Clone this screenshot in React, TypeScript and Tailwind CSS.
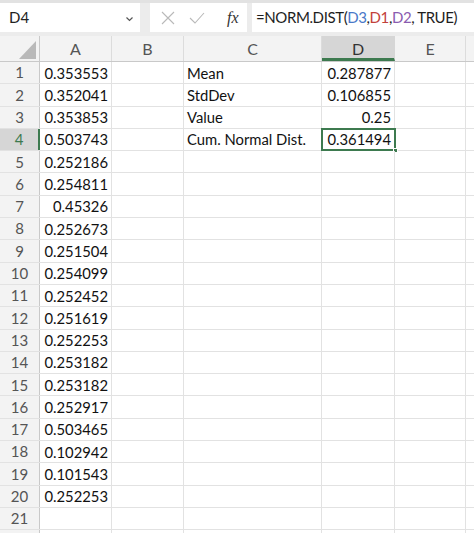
import React from 'react';

const colA = [
    '0.353553', '0.352041', '0.353853', '0.503743', '0.252186', '0.254811', '0.45326',
    '0.252673', '0.251504', '0.254099', '0.252452', '0.251619', '0.252253', '0.253182',
    '0.253182', '0.252917', '0.503465', '0.102942', '0.101543', '0.252253', '',
];

const side: Record<number, [string, string]> = {
    1: ['Mean', '0.287877'],
    2: ['StdDev', '0.106855'],
    3: ['Value', '0.25'],
    4: ['Cum. Normal Dist.', '0.361494'],
};

const cols = [
    { key: 'A', w: 'w-[72px]' },
    { key: 'B', w: 'w-[72px]' },
    { key: 'C', w: 'w-[138px]' },
    { key: 'D', w: 'w-[73px]' },
    { key: 'E', w: 'w-[71px]' },
];

const FONT = { fontFamily: 'Lato, "Open Sans", sans-serif' };

const Toolbar: React.FC = () => (
    <div className="h-[36px] bg-[#ececec] border-t-[3px] border-[#e2e2e2] flex items-start gap-[10px]">
        <div className="w-[140px] h-[29px] bg-white flex items-center justify-between pl-[9px] pr-[6px]">
            <span className="text-[15px] text-[#222]">D4</span>
            <svg width="9" height="6" viewBox="0 0 9 6" className="mt-[2px]">
                <path d="M1.5 1.5 L4.5 4.5 L7.5 1.5" fill="none" stroke="#555" strokeWidth="1.2" />
            </svg>
        </div>
        <div className="w-[97px] h-[29px] bg-white flex items-center pl-[11px] gap-[14px]">
            <svg width="14" height="14" viewBox="0 0 14 14">
                <path d="M1 1 L13 13 M13 1 L1 13" stroke="#b9b9b9" strokeWidth="1.1" />
            </svg>
            <svg width="16" height="12" viewBox="0 0 16 12">
                <path d="M1 6 L6 11 L15 1" fill="none" stroke="#b9b9b9" strokeWidth="1.1" />
            </svg>
            <span className="text-[16px] italic text-[#333] ml-[8px]" style={{ fontFamily: '"Liberation Serif", serif' }}>fx</span>
        </div>
        <div className="flex-1 h-[29px] bg-white flex items-center pl-[4px] -ml-[5px] overflow-hidden">
            <span className="text-[15px] tracking-[-0.4px] text-[#1e1e1e] whitespace-nowrap">
                =NORM.DIST(<span className="text-[#4a78c8]">D3</span>,<span className="text-[#c2413a]">D1</span>,<span className="text-[#8a5cb0]">D2</span>, TRUE)
            </span>
        </div>
    </div>
);

const HeaderRow: React.FC = () => (
    <div className="flex h-[26px] bg-[#f3f3f3] border-b border-[#c9c9c9]">
        <div className="w-[40px] shrink-0 border-r border-[#c9c9c9] flex items-end justify-end pr-[3px] pb-[2px]">
            <svg width="17" height="18" viewBox="0 0 17 18">
                <polygon points="17,0 17,18 0,18" fill="#b9b9b9" />
            </svg>
        </div>
        {cols.map(c => (
            <div
                key={c.key}
                className={`${c.w} shrink-0 border-r flex items-center justify-center text-[16px] ${
                    c.key === 'D'
                        ? 'bg-[#d6d6d6] text-[#333] border-[#d6d6d6] border-b-[3px] border-b-[#3d7a4f] pt-[3px]'
                        : 'text-[#555] border-[#dcdcdc]'
                }`}
            >
                {c.key}
            </div>
        ))}
        <div className="flex-1" />
    </div>
);

const Row: React.FC<{ n: number | null; a: string }> = ({ n, a }) => {
    const s = n ? side[n] : undefined;
    const active = n === 4;
    return (
        <div className="flex h-[22.3px] border-b border-[#e2e2e2] text-[14.8px] text-[#111]">
            <div
                className={`w-[40px] shrink-0 flex items-center justify-center text-[15px] ${
                    active
                        ? 'bg-[#d6d6d6] text-[#3d7a4f] border-r-[2px] border-[#3d7a4f]'
                        : 'bg-[#f3f3f3] text-[#555] border-r border-[#c9c9c9]'
                }`}
            >
                {n}
            </div>
            <div className="w-[72px] shrink-0 border-r border-[#e2e2e2] flex items-center justify-end pr-[3px]">{a}</div>
            <div className="w-[72px] shrink-0 border-r border-[#e2e2e2]" />
            <div className="w-[138px] shrink-0 border-r border-[#e2e2e2] flex items-center pl-[3px]">{s?.[0]}</div>
            <div className="w-[73px] shrink-0 border-r border-[#e2e2e2] relative flex items-center justify-end pr-[3px]">
                {s?.[1]}
                {active && (
                    <>
                        <div className="absolute -left-[1px] -top-[1px] -right-[2px] -bottom-[1px] border-[2px] border-[#3d7a4f]" />
                        <div className="absolute -right-[4px] -bottom-[3px] w-[5px] h-[5px] bg-[#3d7a4f] border border-white" />
                    </>
                )}
            </div>
            <div className="w-[71px] shrink-0 border-r border-[#e2e2e2]" />
            <div className="flex-1" />
        </div>
    );
};

const App: React.FC = () => (
    <div className="w-[474px] h-[533px] overflow-hidden bg-white" style={FONT}>
        <Toolbar />
        <HeaderRow />
        {colA.map((a, i) => (
            <Row key={i} n={i + 1} a={a} />
        ))}
        <Row n={null} a="" />
    </div>
);

export default App;
